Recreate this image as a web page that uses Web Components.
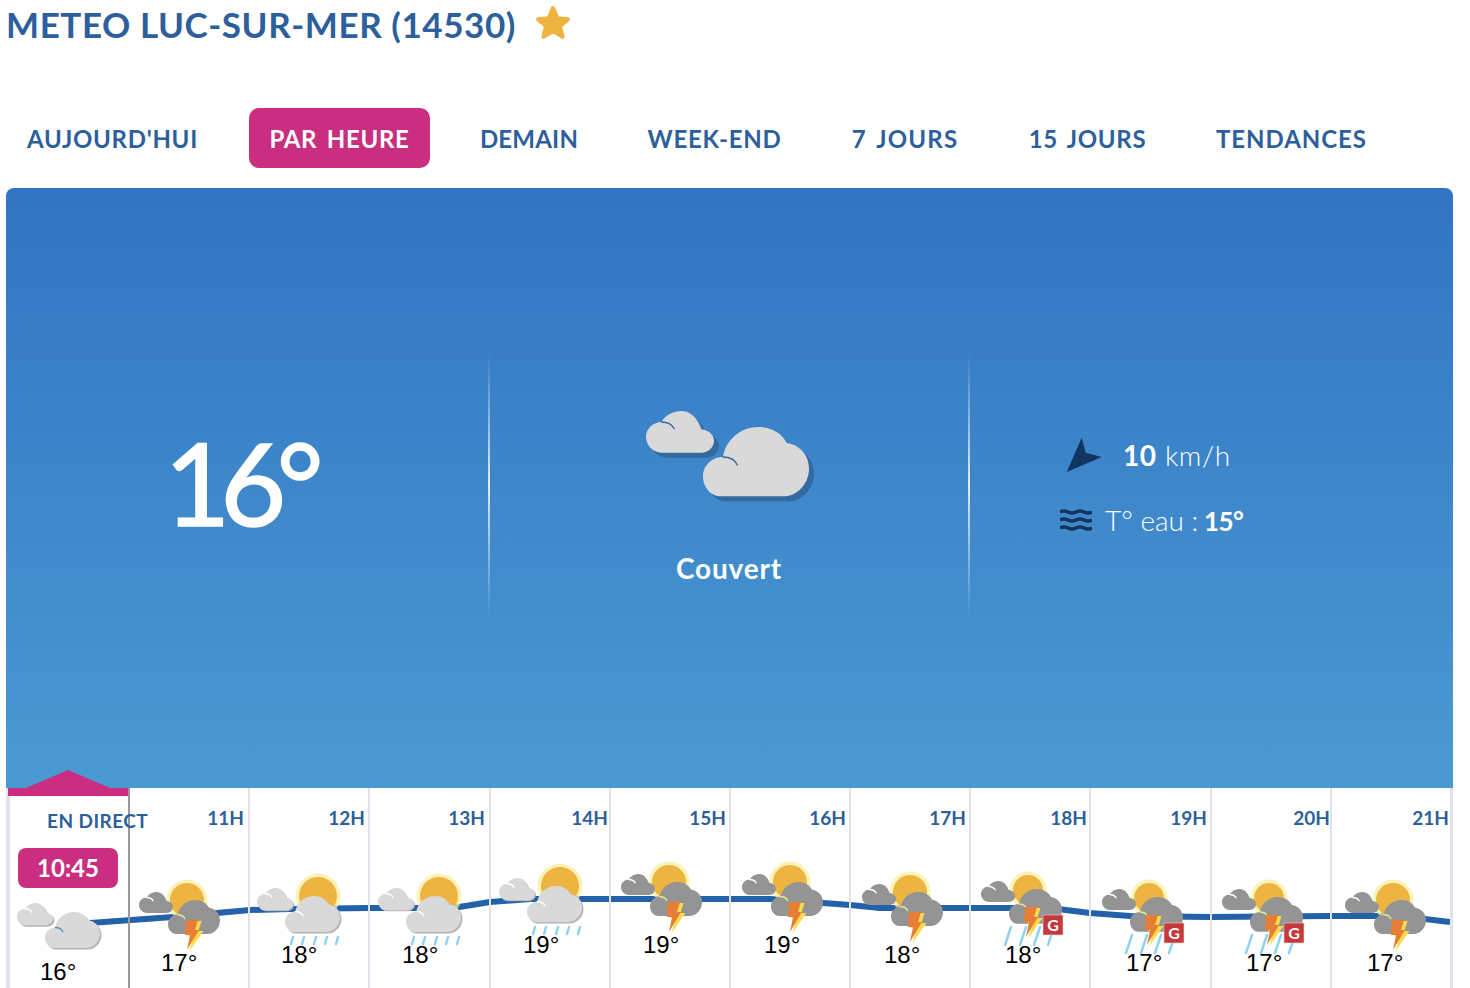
<!DOCTYPE html>
<html lang="fr">
<head>
<meta charset="utf-8">
<title>Meteo Luc-sur-Mer</title>
<style>
html, body { margin: 0; background: #fff; height: 988px; overflow: hidden; font-family: Lato, "Noto Sans", sans-serif; }
</style>
</head>
<body>
<meteo-page></meteo-page>
<script>
const BIG = "M52 208C22 208 0 180 0 148C0 115 27 90 60 90C67 40 112 0 167 0C207 0 237 20 252 48C292 55 318 85 318 125C318 170 282 208 242 208Z";
const BIG_CREASE = "M60 90C78 90 96 98 103 114";
const SMALL = "M47 126C20 126 0 103 0 78C0 53 22 33 47 33C57 13 82 0 107 0C134 0 157 23 167 55C190 58 205 73 205 90C205 110 187 126 167 126Z";
const SMALL_CREASE = "M47 33C62 33 78 40 85 53";

function cloud(path, crease, unit, x, y, w, fill, shadow, creaseColor, off) {
    const s = w / unit;
    const under = shadow ? `<path d="${path}" fill="${shadow}" transform="translate(${off / s} ${off / s})"/>` : "";
    return `<g transform="translate(${x} ${y}) scale(${s})">${under}<path d="${path}" fill="${fill}"/>
        <path d="${crease}" fill="none" stroke="${creaseColor}" stroke-width="${1.4 / s}" stroke-linecap="round"/></g>`;
}
const bigCloud = (x, y, w, fill, shadow, c, off) => cloud(BIG, BIG_CREASE, 318, x, y, w, fill, shadow, c, off);
const smallCloud = (x, y, w, fill, shadow, c, off) => cloud(SMALL, SMALL_CREASE, 205, x, y, w, fill, shadow, c, off);

function sun(x, y, r) {
    return `<circle cx="${x}" cy="${y}" r="${r + 3.5}" fill="#f6f0a0" fill-opacity=".75"/><circle cx="${x}" cy="${y}" r="${r}" fill="#edb441"/>`;
}
function bolt(x, y) {
    return `<g transform="translate(${x} ${y})">
        <polygon points="3,0 15,0 12,10 17,10 3,30 7,15 2,15" fill="#f8da4e" transform="translate(1.5 1)"/>
        <polygon points="1,0 13,0 10,10 14,10 2,30 5,15 0,15" fill="#e67f35"/></g>`;
}
function drops(list, color) {
    return list.map(d => `<line x1="${d[0]}" y1="${d[1]}" x2="${d[2]}" y2="${d[3]}" stroke="${color}" stroke-width="2.4" stroke-linecap="round"/>`).join("");
}

const ICONS = {
    storm: () => sun(57, 19, 17) + smallCloud(9, 11, 34, "#949494", null, "#fff", 0)
        + bigCloud(38, 19, 52, "#949494", null, "#e8e58a", 0) + bolt(55, 39),
    rain: () => sun(68, 23, 19) + smallCloud(7, 15, 36, "#d9d9d9", "#b5b5b5", "#fff", 1)
        + bigCloud(35, 23, 55, "#d9d9d9", "#b5b5b5", "#fff", 1.5)
        + drops([[41, 71, 43, 64], [52, 71, 54, 64], [64, 71, 66, 64], [75, 71, 77, 64], [86, 71, 88, 64]], "#8ed1f2"),
    stormrain: () => sun(54, 17, 15) + smallCloud(7, 8, 34, "#949494", null, "#fff", 0)
        + bigCloud(35, 16, 53, "#949494", null, "#e8e58a", 0)
        + drops([[31, 72, 37, 54], [46, 72, 52, 54], [60, 72, 66, 54], [74, 72, 78, 60]], "#8ed1f2")
        + bolt(50, 34)
        + `<rect x="69" y="42" width="20" height="20" fill="#c6393a" stroke="#f0d0d0" stroke-width=".6"/>
           <text x="79" y="58" font-family="Lato, sans-serif" font-weight="700" font-size="16" fill="#fff" text-anchor="middle">G</text>`,
    live: () => smallCloud(7, 0, 36, "#d9d9d9", "#b5b5b5", "#fff", 1.5)
        + bigCloud(35, 9, 55, "#d9d9d9", "#b5b5b5", "#5b8fc0", 1.5),
    couvert: () => smallCloud(2, 0, 68, "#d9d9d9", "#336a9f", "#336a9f", 5)
        + bigCloud(59, 16, 106, "#d9d9d9", "#336a9f", "#336a9f", 5)
};

class WeatherIcon extends HTMLElement {
    connectedCallback() {
        const w = this.getAttribute("w") || 118;
        const h = this.getAttribute("h") || 70;
        this.attachShadow({ mode: "open" }).innerHTML = `
        <style>:host{display:block;width:${w}px;height:${h}px} svg{display:block;overflow:visible}</style>
        <svg width="${w}" height="${h}" viewBox="0 0 ${w} ${h}">${ICONS[this.getAttribute("kind")]()}</svg>`;
    }
}

const titleTemplate = document.createElement("template");
titleTemplate.innerHTML = `
<style>
:host{display:flex;align-items:flex-start;height:108px;padding-left:6px;box-sizing:border-box}
h1{margin:0;font-size:35px;line-height:48px;font-weight:700;letter-spacing:.56px;color:#2c5f9b;white-space:nowrap}
svg{margin:5px 0 0 19px}
</style>
<h1><slot></slot></h1>
<svg width="36" height="36" viewBox="0 0 34 34"><polygon points="17,3 21,12.5 31,13.5 23.5,20 26,30 17,24.5 8,30 10.5,20 3,13.5 13,12.5" fill="#edb441" stroke="#edb441" stroke-width="4" stroke-linejoin="round"/></svg>`;

class MeteoTitle extends HTMLElement {
    constructor() {
        super();
        this.attachShadow({ mode: "open" });
        this.shadowRoot.appendChild(titleTemplate.content.cloneNode(true));
    }
}

const tabTemplate = document.createElement("template");
tabTemplate.innerHTML = `
<style>
:host{display:flex;align-items:center;justify-content:center;height:60px;border-radius:10px;
  font-size:24px;font-weight:700;color:#2c5f9b;white-space:nowrap;letter-spacing:.7px;word-spacing:3px}
:host([active]){background:#c92e80;color:#fff}
</style>
<slot></slot>`;

class MeteoTab extends HTMLElement {
    constructor() {
        super();
        this.attachShadow({ mode: "open" });
        this.shadowRoot.appendChild(tabTemplate.content.cloneNode(true));
    }
}

const tabsTemplate = document.createElement("template");
tabsTemplate.innerHTML = `
<style>
:host{display:grid;grid-template-columns:211px 181px 136px 173px 146px 157px 189px;column-gap:31px;padding-left:7px;margin-bottom:20px}
</style>
<slot></slot>`;

class MeteoTabs extends HTMLElement {
    constructor() {
        super();
        this.attachShadow({ mode: "open" });
        this.shadowRoot.appendChild(tabsTemplate.content.cloneNode(true));
    }
}

const nowTemplate = document.createElement("template");
nowTemplate.innerHTML = `
<style>
:host{display:block;height:600px;margin:0 17px 0 6px;box-sizing:border-box;padding-top:167px;
  background:linear-gradient(#3274c3,#4a9ad2);border-radius:8px 8px 0 0;color:#fff}
.cols{display:grid;grid-template-columns:482px 480px 485px;height:260px}
.col{box-sizing:border-box;height:260px}
.col + .col{border-left:2px solid transparent;border-image:linear-gradient(rgba(255,255,255,0),rgba(255,255,255,.85) 50%,rgba(255,255,255,0)) 1}
.temp{display:flex;align-items:center;justify-content:center;padding:0 16px 7px 0}
.sky{display:flex;flex-direction:column;align-items:center;padding-top:56px}
.sky ::slotted(sky-label){margin-top:48px}
.sea{padding:76px 0 0 90px}
</style>
<div class="cols">
  <div class="col temp"><slot name="temp"></slot></div>
  <div class="col sky"><slot name="icon"></slot><slot name="label"></slot></div>
  <div class="col sea"><slot name="sea"></slot></div>
</div>`;

class MeteoNow extends HTMLElement {
    constructor() {
        super();
        this.attachShadow({ mode: "open" });
        this.shadowRoot.appendChild(nowTemplate.content.cloneNode(true));
    }
}

const labelTemplate = document.createElement("template");
labelTemplate.innerHTML = `
<style>
:host{display:block;font-size:28px;line-height:34px;font-weight:700;letter-spacing:.85px;color:#fff}
</style>
<slot></slot>`;

class SkyLabel extends HTMLElement {
    constructor() {
        super();
        this.attachShadow({ mode: "open" });
        this.shadowRoot.appendChild(labelTemplate.content.cloneNode(true));
    }
}

const seaTemplate = document.createElement("template");
seaTemplate.innerHTML = `
<style>
:host{display:block;font-size:28px;font-weight:300;color:#fff;white-space:nowrap}
b{font-weight:700}
.wind{display:flex;align-items:center;height:48px;padding-left:6px}
.wind svg{margin-right:21px}
.wind span{letter-spacing:.6px}
.water{display:flex;align-items:center;height:40px;margin-top:21px}
.water svg{margin-right:13px}
.water b{font-size:26px;letter-spacing:-.6px}
</style>
<div class="wind">
  <svg width="36" height="36" viewBox="0 0 36 36"><polygon points="15.7,.7 19.7,15.7 35.7,20 .7,35" fill="#12355f"/></svg>
  <span><b>10</b> km/h</span>
</div>
<div class="water">
  <svg width="32" height="24" viewBox="0 0 32 24" fill="none" stroke="#12355f" stroke-width="3.6">
    <path d="M0 4Q4 2 8 4T16 4T24 4T32 4"/><path d="M0 12Q4 10 8 12T16 12T24 12T32 12"/><path d="M0 20Q4 18 8 20T16 20T24 20T32 20"/>
  </svg>
  <span>T° eau :<b> 15°</b></span>
</div>`;

class SeaInfo extends HTMLElement {
    constructor() {
        super();
        this.attachShadow({ mode: "open" });
        this.shadowRoot.appendChild(seaTemplate.content.cloneNode(true));
    }
}

class HourCell extends HTMLElement {
    connectedCallback() {
        const dx = this.getAttribute("dx") || 0;
        const gap = this.getAttribute("gap") || 0;
        const hx = this.getAttribute("hx") || 0;
        this.attachShadow({ mode: "open" }).innerHTML = `
        <style>
        :host{display:block;position:relative;height:200px;box-sizing:border-box;border-right:2px solid #dfe2e8;padding-top:18px}
        :host(:last-child){border-right:0}
        .hour{height:24px;line-height:24px;text-align:right;padding-right:3px;margin-right:${-hx}px;font-size:19px;font-weight:700;color:#2c5f9b}
        .body{margin:${gap}px 0 0 ${dx}px}
        .temp{margin-left:31px;font:24px/24px "Liberation Sans",Arial,sans-serif;color:#000}
        </style>
        <div class="hour">${this.getAttribute("hour")}</div>
        <div class="body">
          <weather-icon kind="${this.getAttribute("kind")}"></weather-icon>
          <div class="temp">${this.getAttribute("temp")}</div>
        </div>`;
    }
}

class LiveCell extends HTMLElement {
    connectedCallback() {
        this.attachShadow({ mode: "open" }).innerHTML = `
        <style>
        :host{display:block;position:relative;height:200px;box-sizing:border-box;border-right:2px solid #999;padding-top:21px}
        .label{height:24px;line-height:24px;margin-left:37px;font-size:19px;font-weight:700;letter-spacing:.45px;color:#2c5f9b;white-space:nowrap}
        .time{width:100px;height:40px;margin:15px 0 0 8px;border-radius:8px;background:#c92e80;color:#fff;
          font-size:24px;font-weight:700;line-height:40px;text-align:center}
        weather-icon{margin-top:15px}
        .temp{margin:12px 0 0 30px;font:24px/24px "Liberation Sans",Arial,sans-serif;color:#000}
        </style>
        <div class="label">EN DIRECT</div>
        <div class="time">10:45</div>
        <weather-icon kind="live" h="45"></weather-icon>
        <div class="temp">16°</div>`;
    }
}

const stripTemplate = document.createElement("template");
stripTemplate.innerHTML = `
<style>
:host{display:block;position:relative;height:200px;margin:0 17px 0 6px;background:#fff;
  border-left:4px solid #dfe2e8;border-right:3px solid #dfe2e8}
.cells{display:grid;grid-template-columns:120px 120px 120px 121px 120px 120px 120px 120px 120px 121px 120px 118px}
.line{position:absolute;left:0;top:0}
.mark{position:absolute;left:-2px;top:-18px}
</style>
<svg class="line" width="1440" height="200" viewBox="10 788 1440 200">
  <polyline fill="none" stroke="#2361a9" stroke-width="6" stroke-linejoin="round"
    points="90,923 173,917 250,910 290,909 369,908 453,908 490,902 530,899 610,899 730,899 770,899 850,905 880,908 970,908 1050,908 1090,913 1130,916 1210,917 1330,916 1400,916 1450,922"/>
</svg>
<div class="cells"><slot></slot></div>
<svg class="mark" width="120" height="26" viewBox="0 0 120 26"><polygon points="18,18 60,0 102,18" fill="#c92e80"/><rect y="18" width="120" height="8" fill="#c92e80"/></svg>`;

class HourStrip extends HTMLElement {
    constructor() {
        super();
        this.attachShadow({ mode: "open" });
        this.shadowRoot.appendChild(stripTemplate.content.cloneNode(true));
    }
}

const pageTemplate = document.createElement("template");
pageTemplate.innerHTML = `
<style>:host{display:block;width:1470px}</style>
<meteo-title>METEO LUC-SUR-MER (14530)</meteo-title>
<meteo-tabs>
  <meteo-tab>AUJOURD'HUI</meteo-tab>
  <meteo-tab active>PAR HEURE</meteo-tab>
  <meteo-tab style="letter-spacing:.2px">DEMAIN</meteo-tab>
  <meteo-tab>WEEK-END</meteo-tab>
  <meteo-tab style="letter-spacing:1.2px">7 JOURS</meteo-tab>
  <meteo-tab>15 JOURS</meteo-tab>
  <meteo-tab style="letter-spacing:.95px">TENDANCES</meteo-tab>
</meteo-tabs>
<meteo-now>
  <span slot="temp" style="font-size:114px;font-weight:400;letter-spacing:-10px;line-height:1;-webkit-text-stroke:1.5px #fff">16°</span>
  <weather-icon slot="icon" kind="couvert" w="170" h="92"></weather-icon>
  <sky-label slot="label">Couvert</sky-label>
  <sea-info slot="sea"></sea-info>
</meteo-now>
<hour-strip>
  <live-cell></live-cell>
  <hour-cell hour="11H" temp="17°" kind="storm" gap="51" dx="0" hx="-1"></hour-cell>
  <hour-cell hour="12H" temp="18°" kind="rain" gap="43" dx="0" hx="0"></hour-cell>
  <hour-cell hour="13H" temp="18°" kind="rain" gap="43" dx="1" hx="-1"></hour-cell>
  <hour-cell hour="14H" temp="19°" kind="rain" gap="33" dx="1" hx="2"></hour-cell>
  <hour-cell hour="15H" temp="19°" kind="storm" gap="33" dx="1" hx="0"></hour-cell>
  <hour-cell hour="16H" temp="19°" kind="storm" gap="33" dx="2" hx="0"></hour-cell>
  <hour-cell hour="17H" temp="18°" kind="storm" gap="43" dx="2" hx="0"></hour-cell>
  <hour-cell hour="18H" temp="18°" kind="stormrain" gap="43" dx="3" hx="1"></hour-cell>
  <hour-cell hour="19H" temp="17°" kind="stormrain" gap="51" dx="4" hx="0"></hour-cell>
  <hour-cell hour="20H" temp="17°" kind="stormrain" gap="51" dx="3" hx="3"></hour-cell>
  <hour-cell hour="21H" temp="17°" kind="storm" gap="51" dx="4" hx="2"></hour-cell>
</hour-strip>`;

class MeteoPage extends HTMLElement {
    constructor() {
        super();
        this.attachShadow({ mode: "open" });
        this.shadowRoot.appendChild(pageTemplate.content.cloneNode(true));
    }
}

customElements.define("weather-icon", WeatherIcon);
customElements.define("meteo-title", MeteoTitle);
customElements.define("meteo-tab", MeteoTab);
customElements.define("meteo-tabs", MeteoTabs);
customElements.define("meteo-now", MeteoNow);
customElements.define("sky-label", SkyLabel);
customElements.define("sea-info", SeaInfo);
customElements.define("hour-cell", HourCell);
customElements.define("live-cell", LiveCell);
customElements.define("hour-strip", HourStrip);
customElements.define("meteo-page", MeteoPage);
</script>
</body>
</html>
